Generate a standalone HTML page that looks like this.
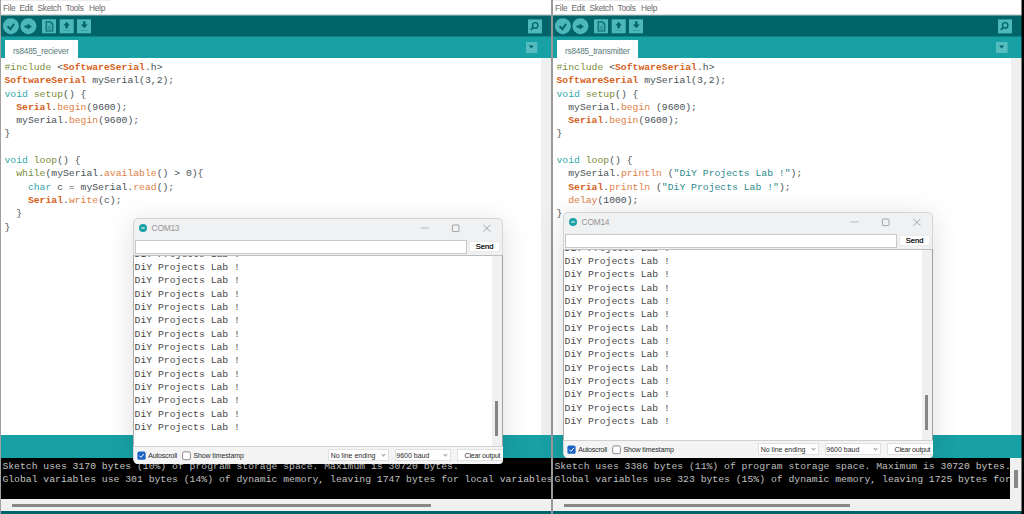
<!DOCTYPE html>
<html><head><meta charset="utf-8">
<style>
*{margin:0;padding:0;box-sizing:border-box}
html,body{width:1024px;height:514px;overflow:hidden;background:#000;font-family:"Liberation Sans",sans-serif}
.abs{position:absolute}
.win{position:absolute;top:0;height:514px;background:#fff;overflow:hidden}
.menubar{position:absolute;left:0;top:0;right:0;height:15px;background:#fff;font-size:8.4px;letter-spacing:-0.3px;color:#6a6a6a;white-space:nowrap;line-height:8px}
.menubar span{position:absolute;top:4px}
.toolbar{position:absolute;left:0;top:14px;right:0;height:23px;background:linear-gradient(#dcdcdc 0,#dcdcdc 1px,#5e9899 1px,#5e9899 2px,#006468 2px,#006468 22px,#0c8387 22px)}
.tabbar{position:absolute;left:0;top:37px;right:0;height:21px;background:#17a1a5}
.tab{position:absolute;top:3px;height:18px;background:#fff;color:#587a7a;font-size:8.2px;letter-spacing:-0.2px;white-space:nowrap}
.tab span{position:absolute;top:7px;line-height:9px}
.editor{position:absolute;left:0;top:58px;right:0;height:377px;background:#fff}
.vscroll{position:absolute;right:0;top:58px;width:10px;height:377px;background:#f0f0f0}
.status{position:absolute;left:0;top:435px;right:0;height:23px;background:#17a1a5}
.console{position:absolute;left:0;top:458px;right:0;height:41px;background:#000;color:#d0d0d0}
.hscroll{position:absolute;left:0;top:499px;right:0;height:12px;background:#f0f0f0}
.thumbh{position:absolute;top:5px;height:3px;background:#878787}
.foot{position:absolute;left:0;top:511px;right:0;height:3px;background:#006468}
.code{position:absolute;font-family:"Liberation Mono",monospace;font-size:9.75px;line-height:13.3px;white-space:pre;color:#4a5256}
.btn{position:absolute;background:#4db7bb}
.circ{position:absolute;width:15px;height:15px;border-radius:50%;background:#4db7bb;top:19px}
.sq{position:absolute;width:14px;height:14px;background:#4db7bb;top:19px}
.k1{color:#d5621c;font-weight:bold}
.k2{color:#de8045}
.kt{color:#33a6a9}
.ko{color:#728e00}
.kp{color:#7b8c3a}
.ks{color:#2b8a8d}
.mon{position:absolute;width:370px;height:246px;background:#f0f1f3;border:1px solid #d4d4d4;border-radius:5px;box-shadow:0 4px 28px rgba(0,0,0,0.13)}
.mon .title{position:absolute;left:17.6px;top:5.4px;font-size:8.4px;line-height:9px;letter-spacing:-0.25px;color:#959595}
.mon .ico{position:absolute;left:4.8px;top:4.8px;width:8.4px;height:8.4px;border-radius:50%;background:#17a1a5}
.mon .ico::after{content:"";position:absolute;left:1.8px;top:3.3px;width:4.8px;height:1.8px;border-radius:1px;background:rgba(255,255,255,0.55)}
.mon .inp{position:absolute;left:1px;top:21px;width:332px;height:14px;background:#fff;border:1px solid #c8c8c8}
.mon .send{position:absolute;left:335px;top:22px;width:31px;height:11px;background:#fff;border:1px solid #eaeaea;font-size:7.6px;color:#1a1a1a;text-align:center;line-height:10px;letter-spacing:0px;text-shadow:0 0 0.4px #333}
.mon .ta{position:absolute;left:-1px;top:36px;width:370px;height:191px;background:#fff;border-top:1px solid #bdbdbd;border-left:1px solid #ababab;border-right:1px solid #a0a0a0;overflow:hidden}
.mon .tsb{position:absolute;right:0;top:0;width:10px;height:191px;background:#f0f0f0}
.mon .thumb{position:absolute;left:3px;width:3px;background:#858585}
.mon .lines{position:absolute;left:0.6px;font-family:"Liberation Mono",monospace;font-size:9.75px;line-height:13.33px;white-space:pre;color:#474747}
.mon .bot{position:absolute;left:0;top:227px;width:369px;height:18px;border-top:1px solid #d0d0d0;background:#f4f4f5;border-radius:0 0 4px 4px;font-size:7px;line-height:8px;color:#2a2a2a;white-space:nowrap;overflow:hidden}
.mon .dd{position:absolute;top:2.4px;height:11.3px;background:#fff;border:1px solid #e0e0e0}
.mon .dd span{position:absolute;left:1.4px;top:1.2px}
.mon .dd i{position:absolute;right:3.2px;top:2.6px;width:3px;height:3px;border-right:0.8px solid #999;border-bottom:0.8px solid #999;transform:rotate(45deg)}
</style></head><body>

<!-- LEFT WINDOW -->
<div class="win" style="left:0;width:552px">
  <div class="abs" style="left:0;top:0;width:1px;height:514px;background:#a0a0a0;z-index:5"></div>
  
  <div class="menubar"><span style="left:3px">File</span><span style="left:19.5px">Edit</span><span style="left:37.5px">Sketch</span><span style="left:65.5px">Tools</span><span style="left:89px">Help</span></div>
  <div class="toolbar"></div>
  <svg class="abs" style="left:0;top:15px" width="552" height="21" viewBox="0 0 552 21">
  <g fill="#4db8bc"><circle cx="10.9" cy="11.2" r="8"/><circle cx="28.4" cy="11.2" r="8"/>
  <rect x="42" y="4.3" width="14" height="14"/><rect x="59.7" y="4.3" width="14" height="14"/><rect x="77" y="4.3" width="14" height="14"/>
  <rect x="528" y="4.4" width="14" height="14"/></g>
  <polyline points="7.6,11.2 10.4,14.2 14,8.9" fill="none" stroke="#006468" stroke-width="2"/>
  <path d="M24.6,11.6 H29" stroke="#006468" stroke-width="2.2"/><path d="M27.6,8.4 L31.8,11.6 L27.6,14.8 Z" fill="#006468"/>
  <path d="M46.2,6.9 H50.6 L52.8,9.1 V16 H46.2 Z" fill="none" stroke="#006468" stroke-width="1.1"/>
  <path d="M50.6,6.9 V9.1 H52.8 M47.6,11 H51.4 M47.6,12.6 H51.4 M47.6,14.2 H51.4" fill="none" stroke="#1a7f82" stroke-width="0.7"/>
  <path d="M63.4,10.4 L66.7,6.8 L70,10.4 Z" fill="#006468"/><rect x="65.5" y="10" width="2.4" height="3.4" fill="#006468"/>
  <path d="M63,15.6 H70.5" stroke="#2d9a9d" stroke-width="0.8"/>
  <rect x="83.1" y="6.4" width="2.4" height="3.6" fill="#006468"/><path d="M80.8,9.6 L84.3,13.3 L87.8,9.6 Z" fill="#006468"/>
  <path d="M80.5,15.6 H88" stroke="#2d9a9d" stroke-width="0.8"/>
  <circle cx="535.2" cy="10.4" r="2.7" fill="none" stroke="#006468" stroke-width="1.3"/>
  <path d="M533.4,12.3 L530.8,14.9" stroke="#006468" stroke-width="1.6"/>
</svg>
  <div class="tabbar"><div class="tab" style="left:5px;width:73px"><span style="left:8px">rs8485_reciever</span></div>
    <svg class="abs" style="left:526.3px;top:5px" width="11.3" height="11.3"><rect width="11.3" height="11.3" fill="#55bcbf"/><path d="M2.7,3.6 H7.9 L5.3,6.6 Z" fill="#006468"/></svg></div>
  <div class="editor"></div>
  <div class="vscroll" style="right:1px"></div>
  <div class="code" style="left:4.5px;top:61px"><span class="kp">#include</span> &lt;<span class="k1">SoftwareSerial</span>.h&gt;
<span class="k1">SoftwareSerial</span> mySerial(3,2);
<span class="kt">void</span> <span class="kp">setup</span>() {
  <span class="k1">Serial</span>.<span class="k2">begin</span>(9600);
  mySerial.<span class="k2">begin</span>(9600);
}

<span class="kt">void</span> <span class="kp">loop</span>() {
  <span class="kp">while</span>(mySerial.<span class="k2">available</span>() &gt; 0){
    <span class="kt">char</span> c = mySerial.<span class="k2">read</span>();
    <span class="k1">Serial</span>.<span class="k2">write</span>(c);
  }
}</div>
  <div class="status"></div>
  <div class="console"><div class="code" style="left:2.4px;top:2px;color:#c4c4c4">Sketch uses 3170 bytes (10%) of program storage space. Maximum is 30720 bytes.
Global variables use 301 bytes (14%) of dynamic memory, leaving 1747 bytes for local variables.</div></div>
  <div class="hscroll"><div class="thumbh" style="left:12px;width:419px"></div></div>
  <div class="foot"></div>
</div>

<!-- RIGHT WINDOW -->
<div class="win" style="left:552px;width:470px">
  <div class="menubar"><span style="left:3px">File</span><span style="left:19.5px">Edit</span><span style="left:37.5px">Sketch</span><span style="left:65.5px">Tools</span><span style="left:89px">Help</span></div>
  <div class="toolbar"></div>
  <svg class="abs" style="left:0;top:15px" width="552" height="21" viewBox="0 0 552 21">
  <g fill="#4db8bc"><circle cx="10.9" cy="11.2" r="8"/><circle cx="28.4" cy="11.2" r="8"/>
  <rect x="42" y="4.3" width="14" height="14"/><rect x="59.7" y="4.3" width="14" height="14"/><rect x="77" y="4.3" width="14" height="14"/>
  <rect x="446" y="4.4" width="14" height="14"/></g>
  <polyline points="7.6,11.2 10.4,14.2 14,8.9" fill="none" stroke="#006468" stroke-width="2"/>
  <path d="M24.6,11.6 H29" stroke="#006468" stroke-width="2.2"/><path d="M27.6,8.4 L31.8,11.6 L27.6,14.8 Z" fill="#006468"/>
  <path d="M46.2,6.9 H50.6 L52.8,9.1 V16 H46.2 Z" fill="none" stroke="#006468" stroke-width="1.1"/>
  <path d="M50.6,6.9 V9.1 H52.8 M47.6,11 H51.4 M47.6,12.6 H51.4 M47.6,14.2 H51.4" fill="none" stroke="#1a7f82" stroke-width="0.7"/>
  <path d="M63.4,10.4 L66.7,6.8 L70,10.4 Z" fill="#006468"/><rect x="65.5" y="10" width="2.4" height="3.4" fill="#006468"/>
  <path d="M63,15.6 H70.5" stroke="#2d9a9d" stroke-width="0.8"/>
  <rect x="83.1" y="6.4" width="2.4" height="3.6" fill="#006468"/><path d="M80.8,9.6 L84.3,13.3 L87.8,9.6 Z" fill="#006468"/>
  <path d="M80.5,15.6 H88" stroke="#2d9a9d" stroke-width="0.8"/>
  <circle cx="453.2" cy="10.4" r="2.7" fill="none" stroke="#006468" stroke-width="1.3"/>
  <path d="M451.4,12.3 L448.8,14.9" stroke="#006468" stroke-width="1.6"/>
</svg>
  <div class="tabbar"><div class="tab" style="left:5px;width:81px"><span style="left:8px">rs8485_transmitter</span></div>
    <svg class="abs" style="left:444px;top:5.2px" width="11.6" height="11"><rect width="11.6" height="11" fill="#55bcbf"/><path d="M3,3.6 H8.2 L5.6,6.6 Z" fill="#006468"/></svg></div>
  <div class="editor"></div>
  <div class="vscroll" style="right:1px"></div>
  <div class="code" style="left:4.5px;top:61px"><span class="kp">#include</span> &lt;<span class="k1">SoftwareSerial</span>.h&gt;
<span class="k1">SoftwareSerial</span> mySerial(3,2);
<span class="kt">void</span> <span class="kp">setup</span>() {
  mySerial.<span class="k2">begin</span> (9600);
  <span class="k1">Serial</span>.<span class="k2">begin</span>(9600);
}

<span class="kt">void</span> <span class="kp">loop</span>() {
  mySerial.<span class="k2">println</span> (<span class="ks">"DiY Projects Lab !"</span>);
  <span class="k1">Serial</span>.<span class="k2">println</span> (<span class="ks">"DiY Projects Lab !"</span>);
  <span class="k2">delay</span>(1000);
}</div>
  <div class="status"></div>
  <div class="console" style="right:12px"><div class="code" style="left:2.4px;top:1.6px;color:#c4c4c4">Sketch uses 3386 bytes (11%) of program storage space. Maximum is 30720 bytes.
Global variables use 323 bytes (15%) of dynamic memory, leaving 1725 bytes for local variables.</div></div>
  <div class="abs" style="left:458px;top:458px;width:12px;height:41px;background:#f0f0f0"><div class="abs" style="left:4.4px;top:11.5px;width:3.6px;height:18.5px;background:#878787"></div></div>
  <div class="hscroll"><div class="thumbh" style="left:12px;width:286px"></div></div>
  <div class="foot"></div>
</div>

<div class="abs" style="left:551px;top:0;width:2px;height:514px;background:#999"></div>

<div class="abs" style="left:1021px;top:0;width:1px;height:514px;background:rgba(0,0,0,0.5)"></div>
<div class="abs" style="left:1px;top:0;width:110px;height:1px;background:#ececec"></div><div class="abs" style="left:553px;top:0;width:108px;height:1px;background:#ececec"></div>
<!-- COM13 -->
<div class="mon" style="left:133px;top:218px">
  <div class="ico"></div><svg class="abs" style="left:0;top:0" width="370" height="22"><path d="M286.6,8.9 H294.6" stroke="#b0b0b0" stroke-width="0.9"/><rect x="318.4" y="6" width="6.6" height="6.6" rx="0.6" fill="none" stroke="#a0a0a0" stroke-width="0.95"/><path d="M349.4,5.8 L356.4,12.8 M356.4,5.8 L349.4,12.8" stroke="#a0a0a0" stroke-width="0.95"/></svg><div class="title">COM13</div>
  <div class="inp"></div><div class="send">Send</div>
  <div class="ta"><div class="lines" style="top:-8.2px">DiY Projects Lab !
DiY Projects Lab !
DiY Projects Lab !
DiY Projects Lab !
DiY Projects Lab !
DiY Projects Lab !
DiY Projects Lab !
DiY Projects Lab !
DiY Projects Lab !
DiY Projects Lab !
DiY Projects Lab !
DiY Projects Lab !
DiY Projects Lab !
DiY Projects Lab !</div><div class="tsb"><div class="thumb" style="top:145px;height:35px"></div></div></div>
  <div class="bot"><svg class="abs" style="left:0;top:0" width="369" height="16"><rect x="3.4" y="4.6" width="8.2" height="8.2" rx="1.6" fill="#1a62c6"/><path d="M5.3,8.7 L7,10.4 L9.9,6.9" fill="none" stroke="#fff" stroke-width="1"/><rect x="48.6" y="4.9" width="7.8" height="7.8" rx="1.6" fill="#fff" stroke="#808080" stroke-width="0.9"/></svg>
    <span class="abs" style="left:14.2px;top:4.6px;letter-spacing:-0.2px">Autoscroll</span><span class="abs" style="left:59.4px;top:4.6px;letter-spacing:-0.1px">Show timestamp</span>
    <div class="dd" style="left:194.3px;width:61px"><span>No line ending</span><i></i></div>
    <div class="dd" style="left:260.7px;width:56.3px"><span style="left:0.6px">9600 baud</span><i></i></div>
    <div class="dd" style="left:322.8px;width:50px;border-right:0"><span style="left:6.8px;letter-spacing:-0.2px">Clear output</span></div>
  </div>
</div>

<!-- COM14 -->
<div class="mon" style="left:563px;top:212px">
  <div class="ico"></div><svg class="abs" style="left:0;top:0" width="370" height="22"><path d="M286.6,8.9 H294.6" stroke="#b0b0b0" stroke-width="0.9"/><rect x="318.4" y="6" width="6.6" height="6.6" rx="0.6" fill="none" stroke="#a0a0a0" stroke-width="0.95"/><path d="M349.4,5.8 L356.4,12.8 M356.4,5.8 L349.4,12.8" stroke="#a0a0a0" stroke-width="0.95"/></svg><div class="title">COM14</div>
  <div class="inp"></div><div class="send">Send</div>
  <div class="ta"><div class="lines" style="top:-8.2px">DiY Projects Lab !
DiY Projects Lab !
DiY Projects Lab !
DiY Projects Lab !
DiY Projects Lab !
DiY Projects Lab !
DiY Projects Lab !
DiY Projects Lab !
DiY Projects Lab !
DiY Projects Lab !
DiY Projects Lab !
DiY Projects Lab !
DiY Projects Lab !
DiY Projects Lab !</div><div class="tsb"><div class="thumb" style="top:145px;height:35px"></div></div></div>
  <div class="bot"><svg class="abs" style="left:0;top:0" width="369" height="16"><rect x="3.4" y="4.6" width="8.2" height="8.2" rx="1.6" fill="#1a62c6"/><path d="M5.3,8.7 L7,10.4 L9.9,6.9" fill="none" stroke="#fff" stroke-width="1"/><rect x="48.6" y="4.9" width="7.8" height="7.8" rx="1.6" fill="#fff" stroke="#808080" stroke-width="0.9"/></svg>
    <span class="abs" style="left:14.2px;top:4.6px;letter-spacing:-0.2px">Autoscroll</span><span class="abs" style="left:59.4px;top:4.6px;letter-spacing:-0.1px">Show timestamp</span>
    <div class="dd" style="left:194.3px;width:61px"><span>No line ending</span><i></i></div>
    <div class="dd" style="left:260.7px;width:56.3px"><span style="left:0.6px">9600 baud</span><i></i></div>
    <div class="dd" style="left:322.8px;width:50px;border-right:0"><span style="left:6.8px;letter-spacing:-0.2px">Clear output</span></div>
  </div>
</div>

</body></html>
